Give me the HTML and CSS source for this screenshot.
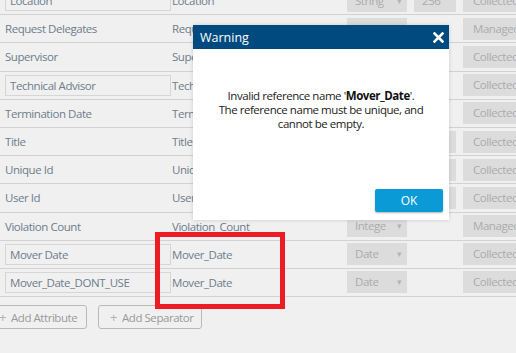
FILE: index.html
```html
<!DOCTYPE html>
<html>
<head>
    <link rel="stylesheet" href="styles.css">
</head>
<body>
    <div class="attr-list">
        <div class="attr-row">
            <div class="cell name"><span class="name-box">Location</span></div>
            <div class="cell ref">Location</div>
            <div class="cell type"><span class="select">String<span class="caret">&#9662;</span></span></div>
            <div class="cell size"><span class="field">256</span></div>
            <div class="cell kind"><span class="field">Collected</span></div>
        </div>
        <div class="attr-row">
            <div class="cell name">Request Delegates</div>
            <div class="cell ref">Request Delegates</div>
            <div class="cell type"><span class="select">String<span class="caret">&#9662;</span></span></div>
            <div class="cell size"></div>
            <div class="cell kind"><span class="field">Managed</span></div>
        </div>
        <div class="attr-row">
            <div class="cell name">Supervisor</div>
            <div class="cell ref">Supervisor</div>
            <div class="cell type"><span class="select">String<span class="caret">&#9662;</span></span></div>
            <div class="cell size"></div>
            <div class="cell kind"><span class="field">Collected</span></div>
        </div>
        <div class="attr-row">
            <div class="cell name"><span class="name-box">Technical Advisor</span></div>
            <div class="cell ref">Technical Advisor</div>
            <div class="cell type"><span class="select">String<span class="caret">&#9662;</span></span></div>
            <div class="cell size"></div>
            <div class="cell kind"><span class="field">Collected</span></div>
        </div>
        <div class="attr-row">
            <div class="cell name">Termination Date</div>
            <div class="cell ref">Termination Date</div>
            <div class="cell type"><span class="select">Date<span class="caret">&#9662;</span></span></div>
            <div class="cell size"></div>
            <div class="cell kind"><span class="field">Collected</span></div>
        </div>
        <div class="attr-row">
            <div class="cell name">Title</div>
            <div class="cell ref">Title</div>
            <div class="cell type"><span class="select">String<span class="caret">&#9662;</span></span></div>
            <div class="cell size"><span class="field">256</span></div>
            <div class="cell kind"><span class="field">Collected</span></div>
        </div>
        <div class="attr-row">
            <div class="cell name">Unique Id</div>
            <div class="cell ref">Unique Id</div>
            <div class="cell type"><span class="select">String<span class="caret">&#9662;</span></span></div>
            <div class="cell size"><span class="field">256</span></div>
            <div class="cell kind"><span class="field">Collected</span></div>
        </div>
        <div class="attr-row">
            <div class="cell name">User Id</div>
            <div class="cell ref">User Id</div>
            <div class="cell type"><span class="select">String<span class="caret">&#9662;</span></span></div>
            <div class="cell size"><span class="field">256</span></div>
            <div class="cell kind"><span class="field">Collected</span></div>
        </div>
        <div class="attr-row">
            <div class="cell name">Violation Count</div>
            <div class="cell ref">Violation_Count</div>
            <div class="cell type"><span class="select">Intege<span class="caret">&#9662;</span></span></div>
            <div class="cell size"></div>
            <div class="cell kind"><span class="field">Managed</span></div>
        </div>
        <div class="attr-row">
            <div class="cell name"><span class="name-box">Mover Date</span></div>
            <div class="cell ref">Mover_Date</div>
            <div class="cell type"><span class="select">Date<span class="caret">&#9662;</span></span></div>
            <div class="cell size"></div>
            <div class="cell kind"><span class="field">Collected</span></div>
        </div>
        <div class="attr-row">
            <div class="cell name"><span class="name-box">Mover_Date_DONT_USE</span></div>
            <div class="cell ref">Mover_Date</div>
            <div class="cell type"><span class="select">Date<span class="caret">&#9662;</span></span></div>
            <div class="cell size"></div>
            <div class="cell kind"><span class="field">Collected</span></div>
        </div>
    </div>

    <div class="actions">
        <button class="add-btn attr-btn"><span class="plus">+</span>Add Attribute</button>
        <button class="add-btn sep-btn"><span class="plus">+</span>Add Separator</button>
    </div>

    <div class="highlight"></div>

    <div class="dialog">
        <div class="dialog-header">
            <span class="dialog-title">Warning</span>
            <svg class="dialog-close" width="11" height="11" viewBox="0 0 11 11">
                <path d="M1.5 1.5 L9.5 9.5 M9.5 1.5 L1.5 9.5" stroke="#fff" stroke-width="2.6" stroke-linecap="square"/>
            </svg>
        </div>
        <div class="dialog-body">
            Invalid reference name '<b>Mover_Date</b>'.<br>
            The reference name must be unique, and<br>
            cannot be empty.
        </div>
        <div class="dialog-footer">
            <button class="ok-btn">OK</button>
        </div>
    </div>
</body>
</html>
```

FILE: styles.css
```css
body {
    margin: 0;
    background: #f0f0f0;
    font-family: "Open Sans", Arial, sans-serif;
    font-size: 11.5px;
    letter-spacing: -0.45px;
    color: #6e7c8c;
    overflow: hidden;
    position: relative;
    height: 353px;
}

.attr-list {
    margin-top: -13px;
}

.attr-row {
    display: grid;
    grid-template-columns: 172px 175px 67px 49px 60px;
    height: 27.2px;
    border-bottom: 1px solid #d2d2d2;
    align-items: center;
}

.cell {
    white-space: nowrap;
    overflow: hidden;
}

.name {
    padding-left: 5px;
}

.name-box {
    display: block;
    box-sizing: border-box;
    width: 166px;
    height: 21px;
    line-height: 19px;
    padding-left: 4px;
    border: 1px solid #d6d6d6;
}

.select,
.field {
    display: block;
    box-sizing: border-box;
    height: 22px;
    line-height: 22px;
    background: #dcdcdc;
    color: #ababab;
    padding-left: 8px;
}

.select {
    width: 60px;
    position: relative;
}

.caret {
    position: absolute;
    right: 5px;
    top: 0;
    font-size: 9px;
    color: #b4b4b4;
}

.size .field {
    width: 42px;
}

.kind .field {
    width: 60px;
    padding-left: 10px;
}

.actions {
    display: flex;
    gap: 11px;
    margin: 8px 0 0 -13px;
}

.add-btn {
    height: 24px;
    border: 1px solid #b9b9b9;
    border-radius: 3px;
    background: #f0f0f0;
    color: #9a9a9a;
    font-family: "Open Sans", Arial, sans-serif;
    font-size: 11.5px;
    letter-spacing: -0.45px;
    padding: 0 0 0 11px;
    text-align: left;
}

.attr-btn {
    width: 100px;
}

.sep-btn {
    width: 104px;
}

.plus {
    font-size: 13px;
    margin-right: 5px;
    color: #b0b0b0;
}

.highlight {
    position: absolute;
    left: 155px;
    top: 232px;
    width: 120px;
    height: 67px;
    border: 5px solid #ed1c24;
}

.dialog {
    position: absolute;
    left: 193px;
    top: 25px;
    width: 256px;
    height: 195px;
    background: #fff;
    box-shadow: 0 0 4px rgba(0,0,0,0.15);
    display: flex;
    flex-direction: column;
}

.dialog-header {
    height: 24px;
    background: #004a80;
    display: flex;
    align-items: center;
    justify-content: space-between;
    padding: 0 5px 0 7px;
}

.dialog-title {
    color: #fff;
    font-size: 12.5px;
    letter-spacing: 0;
}

.dialog-body {
    flex: 1;
    padding-top: 40px;
    text-align: center;
    line-height: 14px;
    color: #222;
}

.dialog-body b {
    color: #111;
}

.dialog-footer {
    display: flex;
    justify-content: flex-end;
    padding: 0 6px 8px 0;
}

.ok-btn {
    width: 68px;
    height: 23px;
    border: none;
    border-radius: 2px;
    background: #0a9ad6;
    color: #fff;
    font-family: "Open Sans", Arial, sans-serif;
    font-size: 12px;
    box-shadow: 0 1px 2px rgba(0,0,0,0.3);
}
```
